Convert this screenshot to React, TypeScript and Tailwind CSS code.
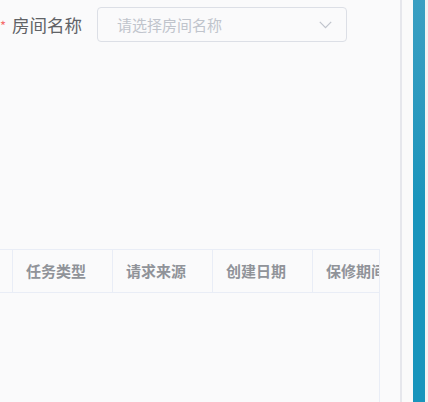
import React from "react";

const font = { fontFamily: '"Noto Sans CJK SC", "Noto Sans", sans-serif' };

export default function App() {
  const cols = ["任务类型", "请求来源", "创建日期", "保修期间"];
  return (
    <div
      className="w-[428px] h-[402px] flex bg-[#fafafb] overflow-hidden"
      style={font}
    >
      <div className="w-[400px] h-full flex flex-col">
        <div className="flex items-center h-[35px] mt-[7px]">
          <span className="w-[12px] text-[13px] leading-none text-[#f56c6c] pt-[2px]">*</span>
          <span className="w-[85px] text-[17.5px] leading-none text-[#606266]">房间名称</span>
          <div className="w-[250px] h-[35px] border border-[#dcdfe6] rounded-[4px] bg-[#fafafb] flex items-center justify-between pl-[19px] pr-[14px]">
            <span className="text-[15px] leading-none text-[#c0c4cc]">请选择房间名称</span>
            <svg width="13" height="8" viewBox="0 0 13 8" fill="none">
              <path d="M0.8 0.8 L6.5 6.6 L12.2 0.8" stroke="#c0c4cc" strokeWidth="1.2" />
            </svg>
          </div>
        </div>
        <div className="mt-[207px] w-[380px] flex-1 border-t border-r border-[#e9edf6] overflow-hidden">
          <div className="flex h-[43px] border-b border-[#e9edf6]">
            <div className="w-[13px] shrink-0 border-r border-[#e9edf6]" />
            {cols.map((c) => (
              <div
                key={c}
                className="w-[100px] shrink-0 border-r border-[#e9edf6] flex items-center pl-[13px] text-[15px] font-bold text-[#909399] whitespace-nowrap overflow-hidden"
              >
                {c}
              </div>
            ))}
          </div>
        </div>
      </div>
      <div className="w-[2px] h-full bg-[#e6e7ec]" />
      <div className="w-[11px] h-full bg-[#fafafa]" />
      <div className="w-[12px] h-full bg-gradient-to-b from-[#3a9fc2] via-[#1a95bc] to-[#1895bc]" />
      <div className="w-[3px] h-full bg-[#f2f2f2]" />
    </div>
  );
}
